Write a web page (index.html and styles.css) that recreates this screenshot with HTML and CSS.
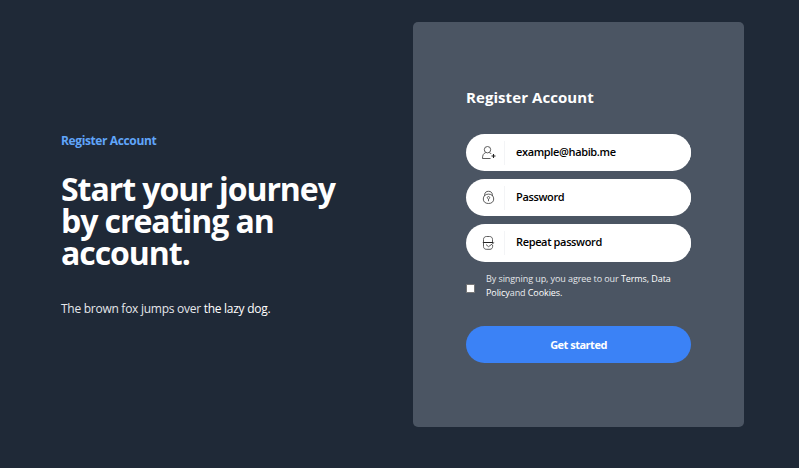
FILE: index.html
```html
<!DOCTYPE html>
<html lang="en">
<head>
    <meta charset="UTF-8">
    <meta name="viewport" content="width=device-width, initial-scale=1.0">
    <title>Register Account</title>
    <link rel="stylesheet" href="styles.css">
</head>
<body>
    <main class="page">
        <section class="intro">
            <p class="eyebrow">Register Account</p>
            <h1>Start your journey<br>by creating an<br>account.</h1>
            <p class="lead">The brown fox jumps over <a href="#">the lazy dog.</a></p>
        </section>

        <form class="card">
            <h2>Register Account</h2>

            <label class="field">
                <span class="icon">
                    <svg viewBox="0 0 16 16" width="16" height="16">
                        <circle cx="6.5" cy="4.7" r="3.2"/>
                        <path d="M4.6 7.7C2.5 8.4 1.5 10 1.5 13.5H9.5M8.4 7.7C9.3 8 9.9 8.4 10.3 9"/>
                        <path d="M12.5 9V13M10.5 11H14.5" class="heavy"/>
                    </svg>
                </span>
                <input type="email" placeholder="example@habib.me">
            </label>
            <label class="field">
                <span class="icon">
                    <svg viewBox="0 0 16 16" width="16" height="16">
                        <path d="M3.6 6V4.6C3.8 2.4 5.3 1.3 7.5 1.3S11.2 2.4 11.4 4.6V6"/>
                        <path d="M7.5 4.1C4 4.1 2.3 6.3 2.3 9S4.2 13.5 7.5 13.5 12.7 11.7 12.7 9 11 4.1 7.5 4.1Z"/>
                        <path d="M7.5 11.2V9.2M7.5 9.2C5.6 8.2 6.2 6.5 7.5 6.5S9.4 8.2 7.5 9.2Z"/>
                    </svg>
                </span>
                <input type="password" placeholder="Password">
            </label>
            <label class="field">
                <span class="icon">
                    <svg viewBox="0 0 16 16" width="16" height="16">
                        <path d="M2.5 7V4.5C2.5 2.6 3.8 1.5 5.5 1.5H8.5C10.3 1.5 11.5 2.6 11.5 4.5V7"/>
                        <path d="M1.8 7.5H12.2" class="heavy"/>
                        <path d="M2.5 7.5V11.5C2.5 13.1 3.7 14.3 5.2 14.3H9C10.6 14.3 11.6 13.1 11.6 11.5V10"/>
                        <path d="M5 9.5L7.5 11.7L13.2 7.5"/>
                    </svg>
                </span>
                <input type="password" placeholder="Repeat password">
            </label>

            <div class="terms">
                <input type="checkbox" id="agree">
                <label for="agree">By singning up, you agree to our <a href="#">Terms, Data</a><br><a href="#">Policy</a>and <a href="#">Cookies.</a></label>
            </div>

            <button type="button">Get started</button>
        </form>
    </main>
</body>
</html>
```

FILE: styles.css
```css
* {
    box-sizing: border-box;
    margin: 0;
    padding: 0;
}
body {
    font-family: "Open Sans", "Noto Sans", sans-serif;
    background: #1f2937;
    color: #fff;
}
a {
    color: #fff;
    text-decoration: none;
}
.page {
    display: flex;
    align-items: center;
    justify-content: space-between;
    height: 449px;
    padding: 0 55px 0 61px;
}
.intro {
    width: 300px;
    white-space: nowrap;
}
.eyebrow {
    font-size: 12px;
    line-height: 18px;
    font-weight: 700;
    letter-spacing: -0.38px;
    color: #60a5fa;
}
h1 {
    margin: 23px 0 31px;
    font-size: 32px;
    line-height: 32px;
    font-weight: 700;
    letter-spacing: -1.05px;
}
.lead {
    font-size: 12px;
    line-height: 18px;
    letter-spacing: -0.27px;
    color: #e5e7eb;
}
.card {
    width: 331px;
    height: 405px;
    padding: 64px 53px 0;
    background: #4b5563;
    border-radius: 5px;
}
h2 {
    margin-bottom: 25px;
    font-size: 15px;
    line-height: 23px;
    font-weight: 700;
    letter-spacing: 0.07px;
}
.field {
    display: flex;
    align-items: center;
    height: 37.4px;
    margin-bottom: 7.7px;
    background: #fff;
    border-radius: 20px;
    overflow: hidden;
}
.icon {
    display: flex;
    align-items: center;
    width: 39px;
    height: 24px;
    padding-left: 15px;
    border-right: 1px solid #f3f4f6;
}
.icon svg {
    fill: none;
    stroke: #4b4b4b;
    stroke-width: 0.9;
}
.icon .heavy {
    stroke: #222;
    stroke-width: 1.1;
}
.field input {
    flex: 1;
    min-width: 0;
    padding: 0 0 2px 11px;
    border: none;
    outline: none;
    font: 600 11px "Open Sans", "Noto Sans", sans-serif;
    letter-spacing: -0.36px;
}
.field input::placeholder {
    color: #000;
}
.terms {
    display: flex;
    align-items: center;
    margin-top: 10px;
    font-size: 9px;
    line-height: 14px;
    letter-spacing: -0.08px;
    white-space: nowrap;
    color: #e5e7eb;
}
.terms input {
    appearance: none;
    width: 9px;
    height: 9px;
    margin: 5px 11px 0 0;
    background: #fff;
    border: 1px solid #767676;
    border-radius: 1px;
}
button {
    width: 100%;
    height: 37px;
    margin-top: 26.5px;
    padding-bottom: 1px;
    border: none;
    border-radius: 20px;
    background: #3b82f6;
    color: #fff;
    font: 700 11px "Open Sans", "Noto Sans", sans-serif;
    letter-spacing: -0.5px;
}
```
